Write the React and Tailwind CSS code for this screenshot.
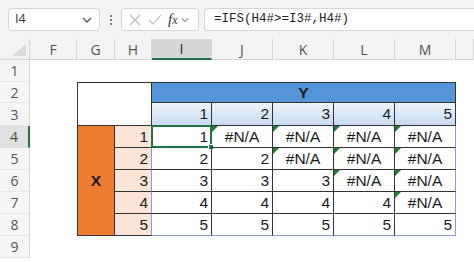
import React from 'react';

const COLS = ['F', 'G', 'H', 'I', 'J', 'K', 'L', 'M', ''];
const NA = '#N/A';
const DATA = [
  [1, NA, NA, NA, NA],
  [2, 2, NA, NA, NA],
  [3, 3, 3, NA, NA],
  [4, 4, 4, 4, NA],
  [5, 5, 5, 5, 5],
];

function Chevron({ className }) {
  return (
    <svg className={className} width="10" height="6" viewBox="0 0 10 6" fill="none" stroke="currentColor" strokeWidth="1.3">
      <path d="M1 1l4 4 4-4" />
    </svg>
  );
}

function Toolbar() {
  return (
    <div className="h-[39px] bg-[#f3f3f3] flex items-start pt-[8px] pl-[8px]">
      {/* name box */}
      <div className="w-[92px] h-[23px] bg-white border border-[#d6d6d6] rounded-[4px] flex items-center pl-[6px] pr-[7px] justify-between">
        <span className="text-[12.5px] text-[#333] font-['Open_Sans',sans-serif]">I4</span>
        <Chevron className="text-[#555]" />
      </div>
      {/* vertical ellipsis */}
      <div className="w-[21px] h-[23px] flex flex-col items-center justify-center gap-[2px]">
        <span className="w-[2px] h-[2px] rounded-full bg-[#555]" />
        <span className="w-[2px] h-[2px] rounded-full bg-[#555]" />
        <span className="w-[2px] h-[2px] rounded-full bg-[#555]" />
      </div>
      {/* formula buttons */}
      <div className="w-[78px] h-[23px] bg-white border border-[#d6d6d6] rounded-[4px] flex items-center pl-[7px] gap-[7px]">
        <svg width="12" height="12" viewBox="0 0 12 12" stroke="#b9b9b9" strokeWidth="1.1">
          <path d="M1 1l10 10M11 1L1 11" />
        </svg>
        <svg width="14" height="11" viewBox="0 0 14 11" fill="none" stroke="#b9b9b9" strokeWidth="1.1">
          <path d="M1 6l4 4 8-9" />
        </svg>
        <span className="text-[15px] italic text-[#333] font-['Liberation_Serif',serif] leading-none -ml-[1px]">
          f<span className="text-[12px]">x</span>
        </span>
        <Chevron className="text-[#888] -ml-[4px] w-[8px]" />
      </div>
      {/* formula bar */}
      <div className="ml-[5px] flex-1 h-[23px] bg-white border border-r-0 border-[#d6d6d6] rounded-l-[4px] flex items-center pl-[9px]">
        <span className="text-[12.5px] text-[#222] font-['Liberation_Mono',monospace]">=IFS(H4#&gt;=I3#,H4#)</span>
      </div>
    </div>
  );
}

function ColHeaders() {
  return (
    <>
      <div className="bg-[#f3f3f3] border-b border-r border-[#d4d4d4] relative">
        <svg className="absolute right-[3px] bottom-[3px]" width="14" height="12" viewBox="0 0 14 12">
          <path d="M14 0V12H0Z" fill="#dadada" />
        </svg>
      </div>
      {COLS.map((c, i) =>
        c === 'I' ? (
          <div key={i} className="bg-[#d6d6d6] border-b-2 border-b-[#217346] border-r border-r-[#d4d4d4] flex items-center justify-center text-[14px] text-[#222] font-['Open_Sans',sans-serif]">
            {c}
          </div>
        ) : (
          <div key={i} className="bg-[#f3f3f3] border-b border-r border-[#d4d4d4] flex items-center justify-center text-[14px] text-[#555] font-['Open_Sans',sans-serif]">
            {c}
          </div>
        )
      )}
    </>
  );
}

function RowHeader({ n }) {
  if (n === 4) {
    return (
      <div className="bg-[#e1e1e1] border-r-2 border-r-[#217346] border-b border-b-[#e2e2e2] flex items-center justify-center text-[14px] text-[#2b5a3c] font-['Open_Sans',sans-serif]">
        {n}
      </div>
    );
  }
  return (
    <div className="bg-[#f5f5f5] border-r border-r-[#d4d4d4] border-b border-b-[#e6e6e6] flex items-center justify-center text-[14px] text-[#555] font-['Open_Sans',sans-serif]">
      {n}
    </div>
  );
}

function Empty() {
  return <div />;
}

function DataCell({ v, col, row }) {
  const isNA = v === NA;
  const right = col === 4 ? 'border-r-[#8c98dc]' : 'border-r-[#333]';
  const bottom = row === 4 ? 'border-b-[#8c98dc]' : 'border-b-[#333]';
  return (
    <div
      className={`relative border-r border-b ${right} ${bottom} flex items-center ${
        isNA ? 'justify-center' : 'justify-end pr-[3px]'
      } text-[15.5px] text-[#1a1a1a]`}
    >
      {isNA && (
        <svg className="absolute left-0 top-0" width="6" height="6" viewBox="0 0 6 6">
          <path d="M0 0H6L0 6Z" fill="#1e7b34" />
        </svg>
      )}
      {v}
      {row === 0 && col === 0 && (
        <div className="absolute -left-[1px] -top-[1px] -right-[1px] -bottom-[1px] border-2 border-[#217346]">
          <div className="absolute -right-[4px] -bottom-[4px] w-[6px] h-[6px] bg-[#217346] border border-white" />
        </div>
      )}
    </div>
  );
}

export default function App() {
  const rows = [];
  for (let r = 1; r <= 9; r++) {
    rows.push(<RowHeader key={`rh${r}`} n={r} />);
    // F column always empty
    rows.push(<Empty key={`f${r}`} />);
    if (r === 3) {
      [1, 2, 3, 4, 5].map((n) =>
        rows.push(
          <div
            key={`y${n}`}
            className="bg-gradient-to-b from-[#eef4fb] to-[#c8dbf1] border-r border-b border-[#333] flex items-center justify-end pr-[3px] text-[15.5px] text-[#1a1a1a]"
          >
            {n}
          </div>
        )
      );
    }
    if (r >= 4 && r <= 8) {
      const i = r - 4;
      rows.push(
        <div
          key={`h${r}`}
          className="bg-[#fce4d6] border-r border-r-[#8c98dc] border-b border-b-[#333] flex items-center justify-end pr-[3px] text-[15.5px] text-[#1a1a1a]"
        >
          {DATA[i][0]}
        </div>
      );
      DATA[i].map((v, c) => rows.push(<DataCell key={`d${r}${c}`} v={v} col={c} row={i} />));
    }
    if (r === 1 || r === 9) {
      for (let c = 0; c < 8; c++) rows.push(<Empty key={`e${r}${c}`} />);
    } else {
      rows.push(<Empty key={`n${r}`} />);
    }
  }

  return (
    <div className="w-[474px] h-[262px] overflow-hidden bg-white font-['Liberation_Sans',Arial,sans-serif]">
      <Toolbar />
      <div className="grid grid-cols-[30px_47px_38px_37px_60px_61px_61px_61px_61px_18px] grid-rows-[21px_22px_21px_23px_22px_22px_22px_22px_22px_22px]">
        <ColHeaders />
        {/* merged G2:H3 */}
        <div className="col-start-3 col-span-2 row-start-3 row-span-2 bg-white border border-[#333]" />
        {/* merged I2:M2 */}
        <div className="col-start-5 col-span-5 row-start-3 bg-[#5594d8] border-t border-r border-b border-[#333] flex items-center justify-center text-[15.5px] font-bold text-[#1a1a1a]">
          Y
        </div>
        {/* merged G4:G8 */}
        <div className="col-start-3 row-start-5 row-span-5 bg-[#ed7d31] border-l border-r border-b border-[#333] flex items-center justify-center text-[15.5px] font-bold text-[#1a1a1a]">
          X
        </div>
        {rows}
      </div>
    </div>
  );
}
